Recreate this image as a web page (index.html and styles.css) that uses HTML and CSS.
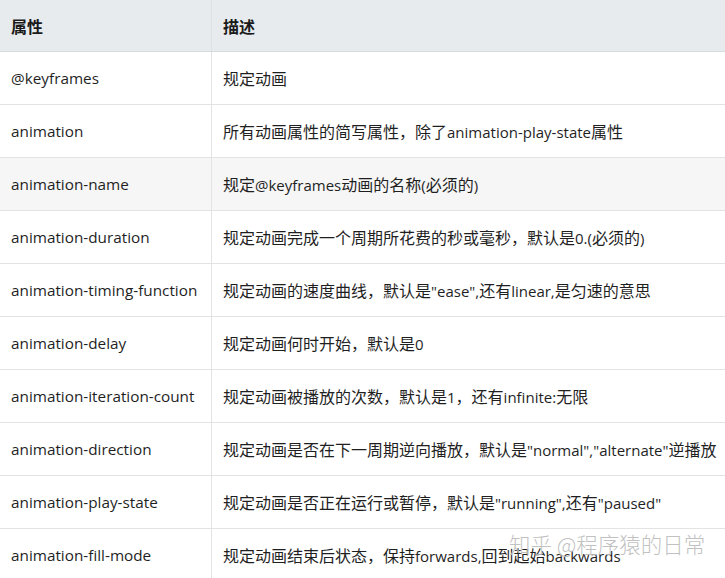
FILE: index.html
```html
<!DOCTYPE html>
<html lang="zh-CN">
<head>
<meta charset="utf-8">
<link rel="stylesheet" href="styles.css">
</head>
<body>
<div class="wrap">
<table class="props">
  <thead>
    <tr><th class="c1">属性</th><th class="c2">描述</th></tr>
  </thead>
  <tbody>
    <tr><td class="c1">@keyframes</td><td class="c2">规定动画</td></tr>
    <tr><td class="c1">animation</td><td class="c2">所有动画属性的简写属性，除了<span class="en">animation-play-state</span>属性</td></tr>
    <tr class="alt"><td class="c1">animation-name</td><td class="c2">规定<span class="en">@keyframes</span>动画的名称<span class="en">(</span>必须的<span class="en">)</span></td></tr>
    <tr><td class="c1">animation-duration</td><td class="c2">规定动画完成一个周期所花费的秒或毫秒，默认是<span class="en">0.(</span>必须的<span class="en">)</span></td></tr>
    <tr><td class="c1">animation-timing-function</td><td class="c2">规定动画的速度曲线，默认是<span class="en">"ease",</span>还有<span class="en">linear,</span>是匀速的意思</td></tr>
    <tr><td class="c1">animation-delay</td><td class="c2">规定动画何时开始，默认是<span class="en">0</span></td></tr>
    <tr><td class="c1">animation-iteration-count</td><td class="c2">规定动画被播放的次数，默认是<span class="en">1</span>，还有<span class="en">infinite:</span>无限</td></tr>
    <tr><td class="c1">animation-direction</td><td class="c2">规定动画是否在下一周期逆向播放，默认是<span class="en">"normal","alternate"</span>逆播放</td></tr>
    <tr><td class="c1">animation-play-state</td><td class="c2">规定动画是否正在运行或暂停，默认是<span class="en">"running",</span>还有<span class="en">"paused"</span></td></tr>
    <tr><td class="c1">animation-fill-mode</td><td class="c2">规定动画结束后状态，保持<span class="en">forwards,</span>回到起始<span class="en">backwards</span></td></tr>
  </tbody>
</table>
<div class="watermark">知乎 @程序猿的日常</div>
</div>
</body>
</html>
```
FILE: styles.css
```css
html, body {
  margin: 0;
  padding: 0;
  background: #ffffff;
}
.wrap {
  position: relative;
  width: 725px;
  height: 578px;
  overflow: hidden;
}
.props {
  border-collapse: collapse;
  width: 725px;
  table-layout: fixed;
  font-family: "Open Sans", "Noto Sans CJK SC", sans-serif;
  font-size: 16px;
  color: #1f1f1f;
}
.props th, .props td {
  text-align: left;
  padding: 0 0 0 11px;
  white-space: nowrap;
  overflow: hidden;
}
.props th {
  height: 51px;
  background: #e8ebee;
  font-weight: bold;
  font-family: "Noto Sans CJK SC", sans-serif;
  border-bottom: 1px solid #d6dbde;
  color: #1a1a1a;
}
.props td {
  height: 52px;
  border-bottom: 1px solid #e3e3e3;
}
.props td.c1 {
  font-size: 15.3px;
}
.props .en {
  font-size: 15px;
}
.props .c1 {
  width: 200px;
  border-right: 1px solid #e3e3e3;
}
.props th.c1 {
  border-right: 1px solid #dde1e4;
}
.props tr.alt td {
  background: #f6f6f6;
}
.watermark {
  position: absolute;
  left: 509px;
  top: 528px;
  font-family: "Noto Sans CJK SC", sans-serif;
  font-size: 21.5px;
  font-weight: 300;
  color: rgba(165, 165, 165, 0.7);
  text-shadow: 0 0 1px rgba(255,255,255,0.9);
}
```
